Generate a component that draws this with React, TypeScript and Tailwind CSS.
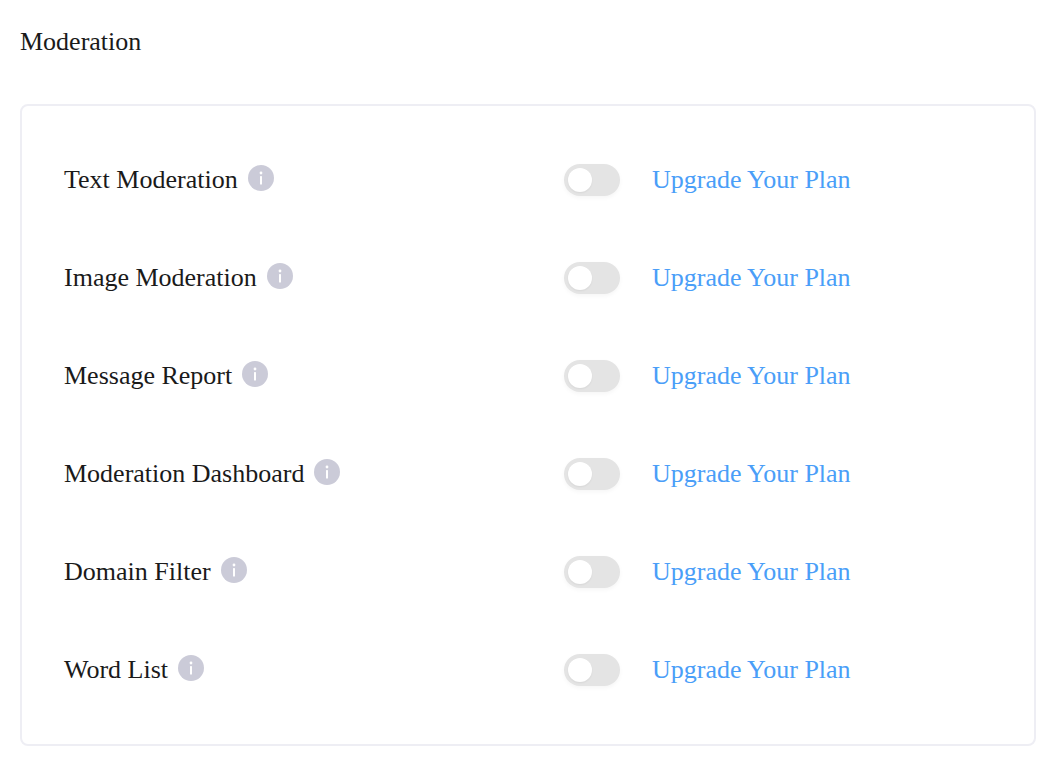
import React from 'react';

const features = ['Text Moderation', 'Image Moderation', 'Message Report', 'Moderation Dashboard', 'Domain Filter', 'Word List'];

function InfoIcon() {
	return (
		<svg width="26" height="26" viewBox="0 0 26 26" className="shrink-0 ml-[10px] mb-[4px]">
			<circle cx="13" cy="13" r="13" fill="#cbcbd8" />
			<circle cx="13" cy="8" r="1.4" fill="#fff" />
			<rect x="12" y="11" width="2" height="8.5" rx="0.6" fill="#fff" />
		</svg>
	);
}

function Toggle() {
	return (
		<div className="w-[56px] h-[32px] rounded-full bg-[#e4e4e4] shrink-0 flex items-center pl-[4px] shadow-[0_2px_4px_rgba(0,0,0,0.04)]">
			<div className="w-[24px] h-[24px] rounded-full bg-white shadow-[0_1px_2px_rgba(0,0,0,0.06)]" />
		</div>
	);
}

export default function App() {
	return (
		<div className="w-[1064px] h-[770px] bg-white overflow-hidden px-[20px] pt-[24px] font-['Liberation_Serif',serif] text-[26px] text-[#1a1a1a]">
			<div className="h-[36px] leading-[36px]">Moderation</div>
			<div className="mt-[44px] w-[1016px] h-[642px] border-2 border-[#eeeef4] rounded-[8px] pl-[42px] pt-[25px]">
				{features.map((name) => (
					<div key={name} className="flex items-center h-[98px]">
						<div className="w-[500px] flex items-center">
							<span className="mb-[2px]">{name}</span>
							<InfoIcon />
						</div>
						<Toggle />
						<a href="#" className="ml-[32px] mb-[2px] text-[#4a9ef8]">Upgrade Your Plan</a>
					</div>
				))}
			</div>
		</div>
	);
}
